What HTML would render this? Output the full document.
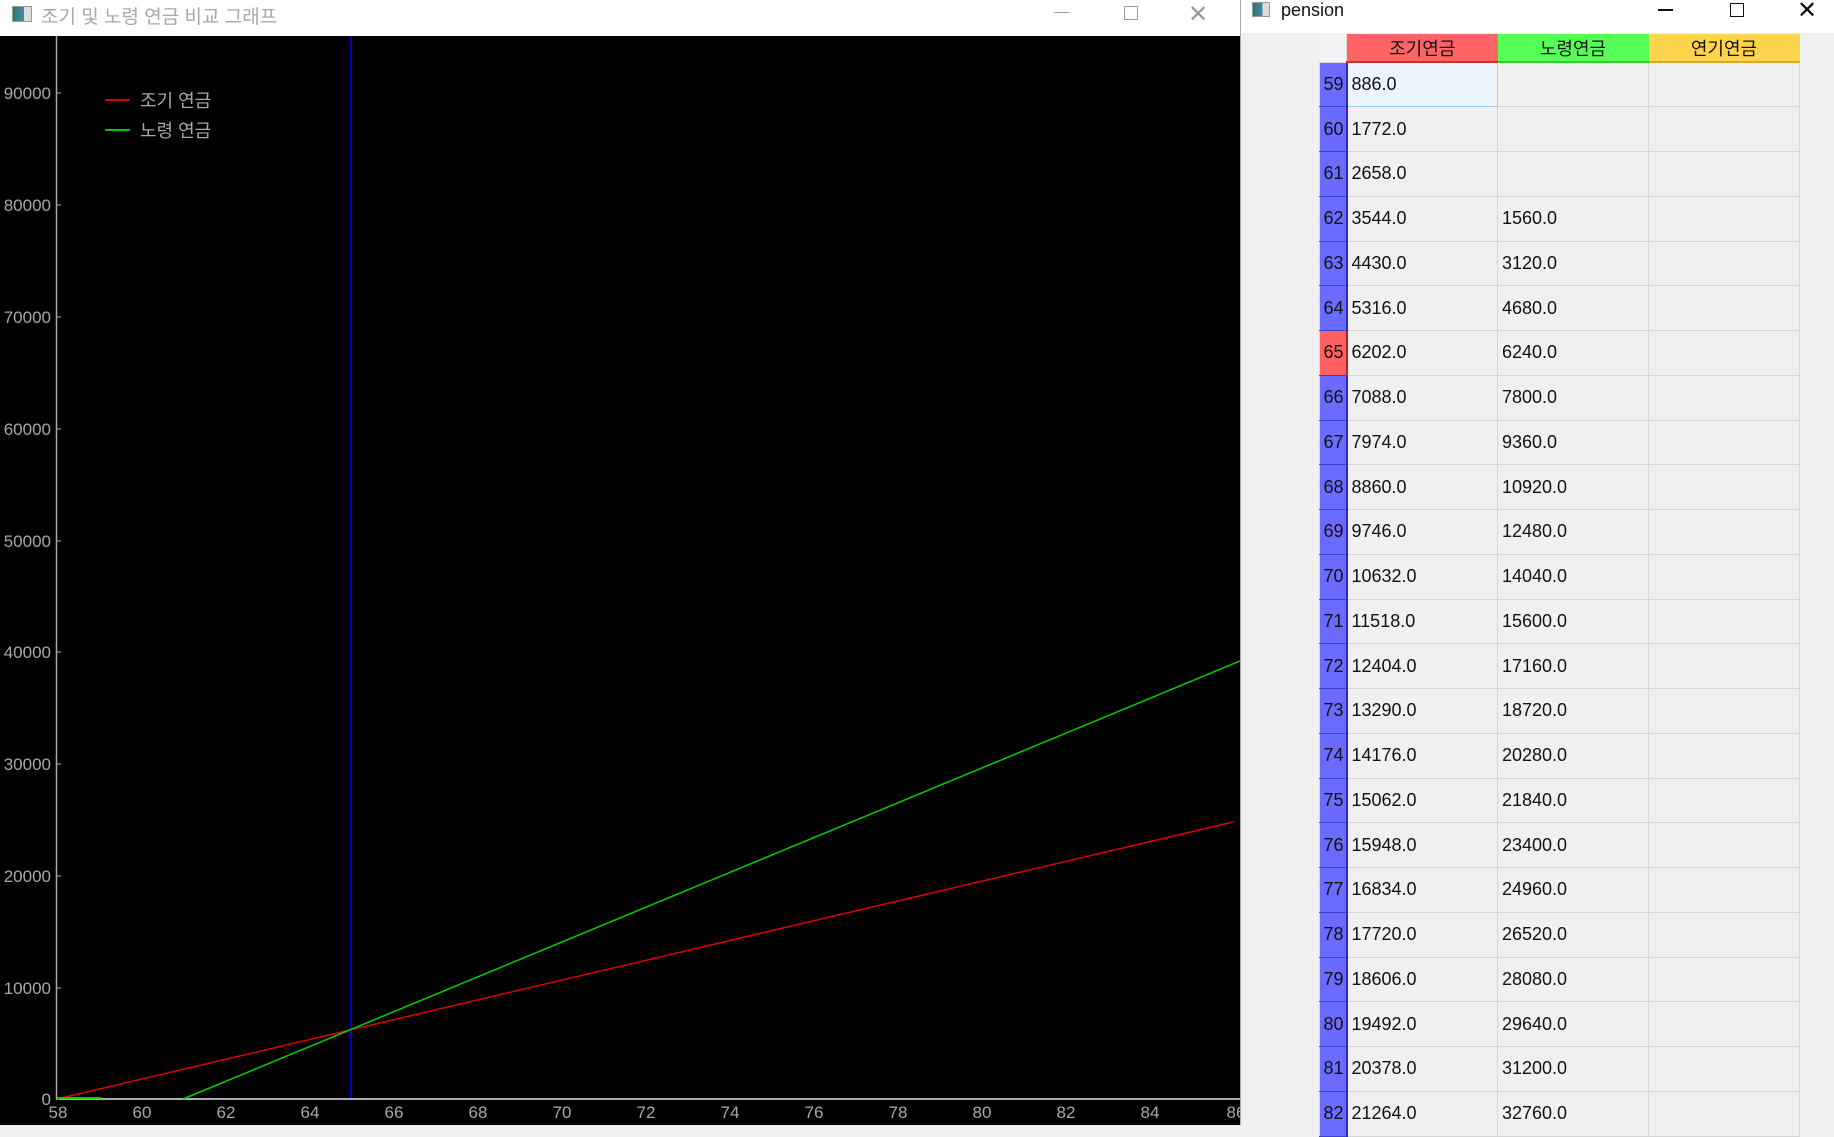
<!DOCTYPE html>
<html><head><meta charset="utf-8">
<style>
*{margin:0;padding:0;box-sizing:border-box}
body{width:1834px;height:1125px;overflow:hidden;background:#f0f0f0;position:relative;font-family:"Liberation Sans","Noto Sans CJK KR",sans-serif}
.lt{position:absolute;left:0;top:0;width:1240px;height:36px;background:#fff}
.rt{position:absolute;left:1240px;top:0;width:594px;height:33px;background:#fff}
.rb{position:absolute;left:1240px;top:0;width:1px;height:1125px;background:#aaa}
table{position:absolute;left:1319px;top:34px;border-collapse:collapse;table-layout:fixed}
td,th{height:44.75px;font-weight:normal;font-size:18px;border:1px solid #d6d6d6;padding:0 0 0 4px;text-align:left;color:#111;overflow:hidden;white-space:nowrap}
th{height:28px;text-align:center;padding:0;font-size:18px;border:none}
td.h{background:#6b6bff;border-right:2px solid #2a2ad0;border-bottom:1px solid #4040d0;padding:0 0 0 0;text-align:right;padding-right:2px;font-size:18px}
td.r{background:#ff6161;border-right:2px solid #c02020}
</style></head><body>
<div class="lt"></div>
<div style="position:absolute;left:12px;top:6px;width:20px;height:16px;border:1px solid #999;background:linear-gradient(90deg,#2e7a6a 0,#4a8ab0 60%,#ddd 60%)"></div>
<div style="position:absolute;left:41px;top:2px;font-size:19px;color:#a8a8a8">조기 및 노령 연금 비교 그래프</div>
<div style="position:absolute;left:1054px;top:12px;width:15px;height:1px;background:#999"></div>
<div style="position:absolute;left:1124px;top:6px;width:14px;height:14px;border:1px solid #999"></div>
<div style="position:absolute;left:1188px;top:0px;font-size:24px;color:#999">✕</div>
<svg style="position:absolute;left:0;top:36px" width="1240" height="1089" viewBox="0 36 1240 1089">
<rect x="0" y="36" width="1240" height="1089" fill="#000"/>
<line x1="351" y1="36" x2="351" y2="1099" stroke="#0000ff" stroke-width="1.5"/>
<line x1="56.5" y1="36" x2="56.5" y2="1099" stroke="#aaa" stroke-width="1.5"/>
<line x1="56" y1="1099" x2="1240" y2="1099" stroke="#aaa" stroke-width="2"/>
<g fill="#a8a8a8" font-size="17" font-family="Liberation Sans,sans-serif" text-anchor="end">
<text x="51" y="99">90000</text><text x="51" y="211">80000</text><text x="51" y="323">70000</text><text x="51" y="435">60000</text><text x="51" y="547">50000</text><text x="51" y="658">40000</text><text x="51" y="770">30000</text><text x="51" y="882">20000</text><text x="51" y="994">10000</text><text x="51" y="1105">0</text>
</g>
<g stroke="#aaa"><line x1="57" y1="93" x2="61" y2="93"/><line x1="57" y1="205" x2="61" y2="205"/><line x1="57" y1="317" x2="61" y2="317"/><line x1="57" y1="429" x2="61" y2="429"/><line x1="57" y1="541" x2="61" y2="541"/><line x1="57" y1="652" x2="61" y2="652"/><line x1="57" y1="764" x2="61" y2="764"/><line x1="57" y1="876" x2="61" y2="876"/><line x1="57" y1="988" x2="61" y2="988"/></g>
<g fill="#a8a8a8" font-size="17" font-family="Liberation Sans,sans-serif" text-anchor="middle">
<text x="58" y="1118">58</text><text x="142" y="1118">60</text><text x="226" y="1118">62</text><text x="310" y="1118">64</text><text x="394" y="1118">66</text><text x="478" y="1118">68</text><text x="562" y="1118">70</text><text x="646" y="1118">72</text><text x="730" y="1118">74</text><text x="814" y="1118">76</text><text x="898" y="1118">78</text><text x="982" y="1118">80</text><text x="1066" y="1118">82</text><text x="1150" y="1118">84</text><text x="1236" y="1118">86</text>
</g>
<line x1="57" y1="1099" x2="1233" y2="822" stroke="#e00000" stroke-width="1.5"/>
<line x1="183" y1="1099" x2="1240" y2="661" stroke="#00d000" stroke-width="1.5"/>
<line x1="57" y1="1098" x2="101" y2="1098" stroke="#00d000" stroke-width="2"/>
<line x1="105" y1="100" x2="130" y2="100" stroke="#d00000" stroke-width="2"/>
<line x1="105" y1="130" x2="130" y2="130" stroke="#00c000" stroke-width="2"/>
<g fill="#a8a8a8" font-size="18" font-family="Liberation Sans,Noto Sans CJK KR,sans-serif"><text x="140" y="107">조기 연금</text><text x="140" y="137">노령 연금</text></g>
</svg>
<div class="rt"></div><div class="rb"></div>
<div style="position:absolute;left:1252px;top:2px;width:18px;height:15px;border:1px solid #999;background:linear-gradient(90deg,#2e7a6a 0,#4a8ab0 60%,#ddd 60%)"></div>
<div style="position:absolute;left:1281px;top:0px;font-size:18px;color:#111">pension</div>
<div style="position:absolute;left:1658px;top:9px;width:15px;height:1.5px;background:#111"></div>
<div style="position:absolute;left:1730px;top:3px;width:14px;height:14px;border:1.5px solid #111"></div>
<div style="position:absolute;left:1797px;top:-4px;font-size:24px;color:#111">✕</div>
<div style="position:absolute;left:1799px;top:34px;width:35px;height:28px;background:#f0f0f0"></div>
<table>
<colgroup><col style="width:27px"><col style="width:151px"><col style="width:151px"><col style="width:151px"></colgroup>
<tr><th style="background:#f4f4f4;border-right:1px solid #ddd"></th><th style="background:#ff6464;border-bottom:2px solid #d03030">조기연금</th><th style="background:#55ff55;border-bottom:2px solid #30d030">노령연금</th><th style="background:#ffd44a;border-bottom:2px solid #e0aa20">연기연금</th></tr>
<tr><td class="h">59</td><td style="background:#ecf5fd;border:1.5px solid #9ccaef">886.0</td><td></td><td></td></tr>
<tr><td class="h">60</td><td>1772.0</td><td></td><td></td></tr>
<tr><td class="h">61</td><td>2658.0</td><td></td><td></td></tr>
<tr><td class="h">62</td><td>3544.0</td><td>1560.0</td><td></td></tr>
<tr><td class="h">63</td><td>4430.0</td><td>3120.0</td><td></td></tr>
<tr><td class="h">64</td><td>5316.0</td><td>4680.0</td><td></td></tr>
<tr><td class="h r">65</td><td>6202.0</td><td>6240.0</td><td></td></tr>
<tr><td class="h">66</td><td>7088.0</td><td>7800.0</td><td></td></tr>
<tr><td class="h">67</td><td>7974.0</td><td>9360.0</td><td></td></tr>
<tr><td class="h">68</td><td>8860.0</td><td>10920.0</td><td></td></tr>
<tr><td class="h">69</td><td>9746.0</td><td>12480.0</td><td></td></tr>
<tr><td class="h">70</td><td>10632.0</td><td>14040.0</td><td></td></tr>
<tr><td class="h">71</td><td>11518.0</td><td>15600.0</td><td></td></tr>
<tr><td class="h">72</td><td>12404.0</td><td>17160.0</td><td></td></tr>
<tr><td class="h">73</td><td>13290.0</td><td>18720.0</td><td></td></tr>
<tr><td class="h">74</td><td>14176.0</td><td>20280.0</td><td></td></tr>
<tr><td class="h">75</td><td>15062.0</td><td>21840.0</td><td></td></tr>
<tr><td class="h">76</td><td>15948.0</td><td>23400.0</td><td></td></tr>
<tr><td class="h">77</td><td>16834.0</td><td>24960.0</td><td></td></tr>
<tr><td class="h">78</td><td>17720.0</td><td>26520.0</td><td></td></tr>
<tr><td class="h">79</td><td>18606.0</td><td>28080.0</td><td></td></tr>
<tr><td class="h">80</td><td>19492.0</td><td>29640.0</td><td></td></tr>
<tr><td class="h">81</td><td>20378.0</td><td>31200.0</td><td></td></tr>
<tr><td class="h">82</td><td>21264.0</td><td>32760.0</td><td></td></tr>
</table>
</body></html>
